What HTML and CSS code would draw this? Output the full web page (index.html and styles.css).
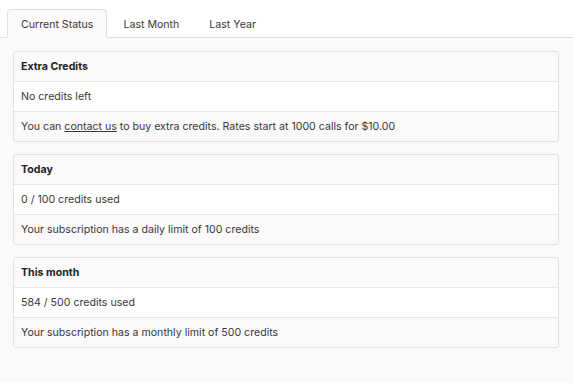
FILE: index.html
```html
<!DOCTYPE html>
<html lang="en">
<head>
  <meta charset="UTF-8">
  <meta name="viewport" content="width=device-width, initial-scale=1.0">
  <title>Usage</title>
  <link rel="stylesheet" href="styles.css">
</head>
<body>
  <div class="tabs">
    <div class="tab is-active">Current Status</div>
    <div class="tab">Last Month</div>
    <div class="tab">Last Year</div>
  </div>

  <div class="content">
    <div class="panel">
      <div class="panel-header">Extra Credits</div>
      <div class="panel-row is-white">No credits left</div>
      <div class="panel-row">You can <a href="#">contact us</a> to buy extra credits. Rates start at 1000 calls for $10.00</div>
    </div>

    <div class="panel">
      <div class="panel-header">Today</div>
      <div class="panel-row is-white">0 / 100 credits used</div>
      <div class="panel-row">Your subscription has a daily limit of 100 credits</div>
    </div>

    <div class="panel">
      <div class="panel-header">This month</div>
      <div class="panel-row is-white">584 / 500 credits used</div>
      <div class="panel-row">Your subscription has a monthly limit of 500 credits</div>
    </div>
  </div>
</body>
</html>
```

FILE: styles.css
```css
* {
  box-sizing: border-box;
}

html,
body {
  height: 100%;
}

body {
  margin: 0;
  display: flex;
  flex-direction: column;
  background: white;
  color: #383838;
  font-family: Inter, "Noto Sans", sans-serif;
  font-size: 10.6px;
}

.tabs {
  display: flex;
  padding: 9px 0 0 7px;
  border-bottom: 1px solid #e2e0e1;
}

.tab {
  height: 28px;
  line-height: 29px;
  padding: 0 13px;
  margin-right: 2px;
  margin-bottom: -1px;
  border: 1px solid transparent;
  border-radius: 4px 4px 0 0;
}

.tab.is-active {
  height: 29px;
  background: #fbf9fa;
  border-color: #e2e0e1;
  border-bottom-color: #fbf9fa;
}

.content {
  flex: 1;
  background: #fbf9fa;
  padding: 13px 14px 0 13px;
}

.panel {
  border: 1px solid #e2e0e1;
  border-radius: 3px;
  margin-bottom: 12px;
  overflow: hidden;
}

.panel-header,
.panel-row {
  height: 30px;
  line-height: 29px;
  padding: 0 7px;
  border-bottom: 1px solid #e8e6e7;
}

.panel-row:last-child {
  height: 29px;
  border-bottom: 0;
}

.panel-header {
  font-weight: 700;
  color: #222;
}

.panel-row.is-white {
  background: white;
}

.panel-row a {
  color: #383838;
}
```
